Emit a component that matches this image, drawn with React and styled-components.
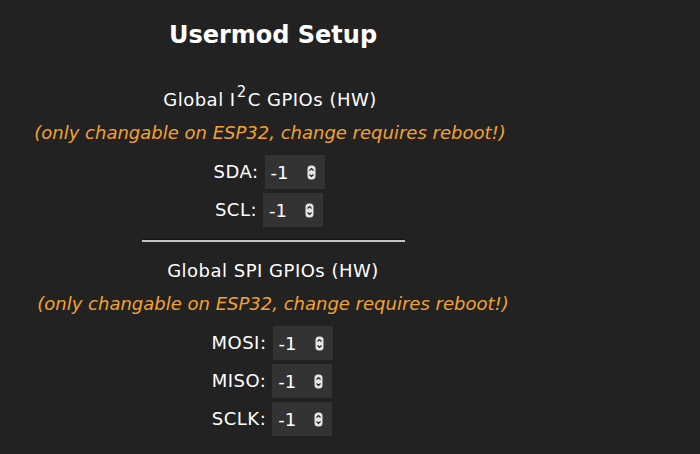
import React from 'react';
import styled, { createGlobalStyle } from 'styled-components';

const GlobalStyle = createGlobalStyle`
  html, body {
    margin: 0;
    padding: 0;
    background: #222;
  }
  body {
    font-family: "DejaVu Sans", Verdana, sans-serif;
    color: #fff;
  }
`;

const pins = {
  i2c: ['SDA', 'SCL'],
  spi: ['MOSI', 'MISO', 'SCLK'],
};

const App = () => (
  <>
    <GlobalStyle />
    <Page>
      <Title>Usermod Setup</Title>

      <Section $trail={6}>
        <Heading>
          Global I<sup>2</sup>C GPIOs (HW)
        </Heading>
        <Warning>(only changable on ESP32, change requires reboot!)</Warning>
        {pins.i2c.map((p) => (
          <PinRow key={p} label={p} />
        ))}
      </Section>

      <Rule />

      <Section>
        <Heading>Global SPI GPIOs (HW)</Heading>
        <Warning>(only changable on ESP32, change requires reboot!)</Warning>
        {pins.spi.map((p) => (
          <PinRow key={p} label={p} />
        ))}
      </Section>
    </Page>
  </>
);

const PinRow = ({ label, value = -1 }) => (
  <Row>
    <Label>{label}:</Label>
    <NumberBox>
      <span>{value}</span>
      <Spinner />
    </NumberBox>
  </Row>
);

const Spinner = () => (
  <SpinIcon width="9" height="15" viewBox="0 0 9 15">
    <rect x="0.5" y="0.5" width="8" height="14" rx="3.5" fill="#e6e6e6" />
    <path d="M2.5 5.5 L4.5 3.5 L6.5 5.5" fill="none" stroke="#222" strokeWidth="1.2" />
    <path d="M2.5 9.5 L4.5 11.5 L6.5 9.5" fill="none" stroke="#222" strokeWidth="1.2" />
  </SpinIcon>
);

// Styled Components
const Page = styled.div`
  width: 546px;
  padding-top: 21px;
  text-align: center;
`;

const Title = styled.h2`
  margin: 0 0 41px;
  font-size: 24px;
  line-height: 28px;
  font-weight: bold;
`;

const Section = styled.div`
  display: flex;
  flex-direction: column;
  align-items: center;
  padding-right: ${({ $trail }) => $trail || 0}px;
`;

const Heading = styled.div`
  font-size: 18px;
  line-height: 20px;
  letter-spacing: 0.5px;

  sup {
    font-size: 15px;
    line-height: 0;
    vertical-align: baseline;
    position: relative;
    top: -9px;
    margin: 0 1px;
  }
`;

const Warning = styled.i`
  display: block;
  margin: 13px 0 10px;
  font-size: 18px;
  line-height: 20px;
  color: #f2a232;
`;

const Row = styled.div`
  display: flex;
  align-items: center;
  justify-content: center;
  gap: 4px;
`;

const Label = styled.span`
  font-size: 18px;
  line-height: 20px;
  letter-spacing: 0.5px;
`;

const NumberBox = styled.div`
  display: flex;
  align-items: center;
  justify-content: space-between;
  box-sizing: border-box;
  width: 60px;
  height: 34px;
  margin: 2px;
  padding: 0 9px 0 6px;
  background: #333;
  font-size: 18px;
  color: #fff;
`;

const SpinIcon = styled.svg`
  display: block;
`;

const Rule = styled.hr`
  box-sizing: border-box;
  width: 263px;
  height: 3px;
  margin: 10px auto 19px;
  border: none;
  border-top: 1px solid #141414;
  border-bottom: 2px solid #c4c4c4;
`;

export default App;
